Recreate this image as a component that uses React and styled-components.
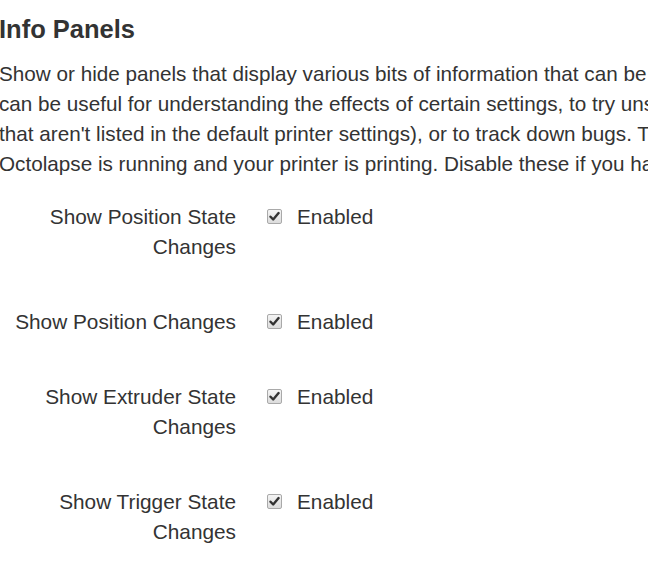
import React from "react";
import styled, { createGlobalStyle } from "styled-components";

const GlobalStyle = createGlobalStyle`
  html, body {
    margin: 0;
    padding: 0;
    background: #fff;
    overflow: hidden;
  }
  body {
    font-family: "Liberation Sans", Arial, Helvetica, sans-serif;
    color: #333;
  }
`;

const Page = styled.div`
  width: 649px;
  height: 574px;
  overflow: hidden;
  margin-left: -1px;
`;

const Heading = styled.h4`
  margin: 14px 0 0;
  font-size: 25.5px;
  line-height: 30px;
  font-weight: bold;
  color: #333;
  white-space: nowrap;
`;

const Intro = styled.p`
  margin: 15px 0 0;
  font-size: 20.7px;
  line-height: 30px;
  white-space: nowrap;
`;

const Form = styled.div`
  margin-top: 23px;
  display: flex;
  flex-direction: column;
  gap: 45px;
`;

const Row = styled.div`
  display: grid;
  grid-template-columns: 237px auto;
  column-gap: 31px;
  align-items: start;
  font-size: 20.8px;
  line-height: 30px;
`;

const Label = styled.label`
  text-align: right;
`;

const Control = styled.label`
  display: flex;
  align-items: center;
  gap: 15px;
  height: 30px;
`;

const Box = styled.span`
  box-sizing: border-box;
  width: 15px;
  height: 15px;
  border: 1px solid #a9a9a9;
  border-radius: 2px;
  background: linear-gradient(#f4f4f4, #dcdcdc);
  display: flex;
  align-items: center;
  justify-content: center;
  margin-top: -1px;
`;

function Check() {
  return (
    <Box>
      <svg width="11" height="11" viewBox="0 0 10 10">
        <path
          d="M1.4 5.2 L3.8 7.7 L8.7 1.9"
          fill="none"
          stroke="#333"
          strokeWidth="2.2"
          strokeLinecap="round"
          strokeLinejoin="round"
        />
      </svg>
    </Box>
  );
}

const panels = [
  "Show Position State Changes",
  "Show Position Changes",
  "Show Extruder State Changes",
  "Show Trigger State Changes",
];

export default function App() {
  return (
    <Page>
      <GlobalStyle />
      <Heading>Info Panels</Heading>
      <Intro>
        Show or hide panels that display various bits of information that can be helpful. These panels
        <br />
        can be useful for understanding the effects of certain settings, to try unsupported settings (settings
        <br />
        that aren't listed in the default printer settings), or to track down bugs. These panels can slow
        <br />
        Octolapse is running and your printer is printing. Disable these if you have performance issues.
      </Intro>
      <Form>
        {panels.map((name) => (
          <Row key={name}>
            <Label>{name}</Label>
            <Control>
              <Check />
              Enabled
            </Control>
          </Row>
        ))}
      </Form>
    </Page>
  );
}
